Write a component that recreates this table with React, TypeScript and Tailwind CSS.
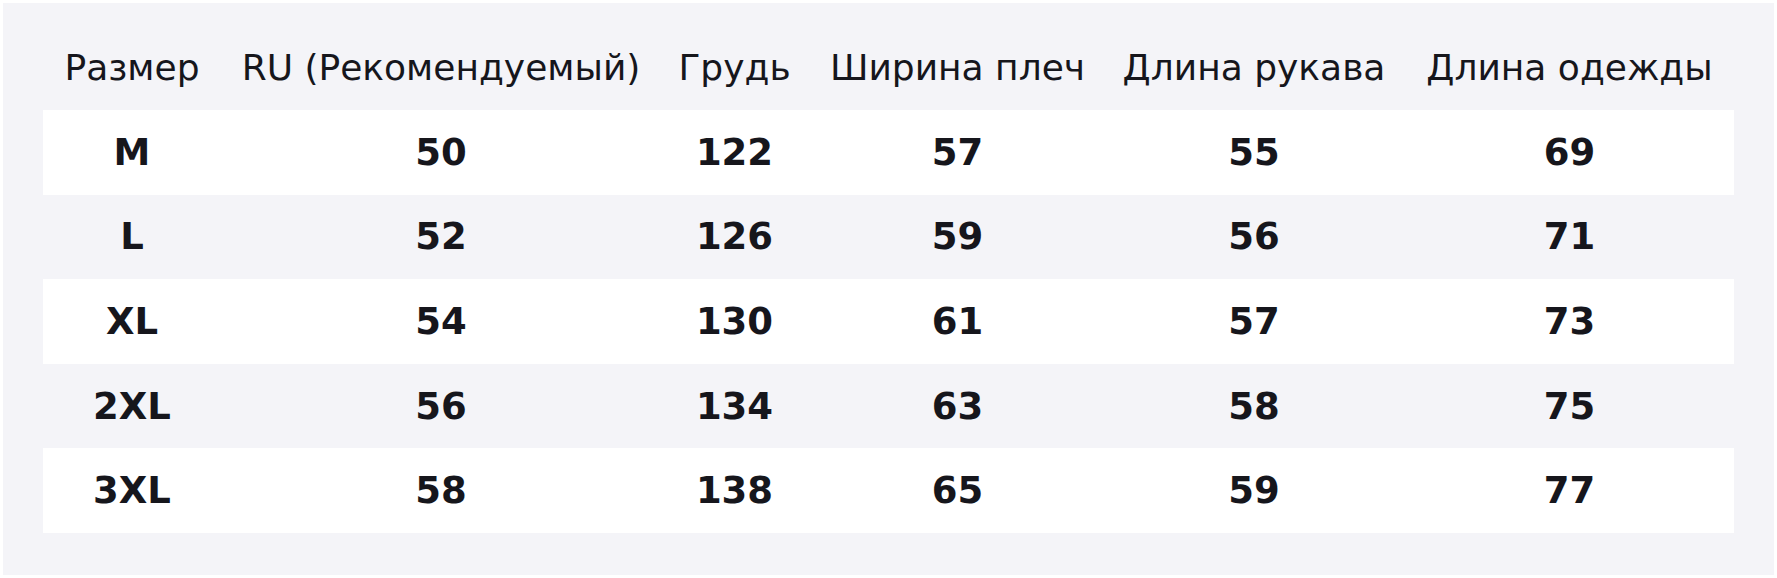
const headers = ['Размер', 'RU (Рекомендуемый)', 'Грудь', 'Ширина плеч', 'Длина рукава', 'Длина одежды']

const rows = [
  ['M', '50', '122', '57', '55', '69'],
  ['L', '52', '126', '59', '56', '71'],
  ['XL', '54', '130', '61', '57', '73'],
  ['2XL', '56', '134', '63', '58', '75'],
  ['3XL', '58', '138', '65', '59', '77'],
]

const widths = ['w-[182px] pr-[4px]', 'w-[432px]', 'w-[155px]', 'w-[291px]', 'w-[302px]', 'w-auto']

export default function App() {
  return (
    <div className="w-[1777px] h-[578px] bg-white p-[3px] font-['DejaVu_Sans',sans-serif] text-[#16161c]">
      <div className="h-full bg-[#f4f4f8] px-[40px] pt-[40px]">
        <table className="w-full table-fixed border-collapse">
          <thead>
            <tr className="h-[67px]">
              {headers.map((h, i) => (
                <th
                  key={h}
                  className={`${widths[i]} align-top pt-[10px] text-center text-[36px] font-normal leading-[30px] whitespace-nowrap`}
                >
                  {h}
                </th>
              ))}
            </tr>
          </thead>
          <tbody>
            {rows.map((row, r) => (
              <tr key={row[0]} className={`h-[84.6px] ${r % 2 === 0 ? 'bg-white' : 'bg-[#f4f4f8]'}`}>
                {row.map((cell, i) => (
                  <td
                    key={i}
                    className={`text-center align-middle text-[37px] font-bold leading-none py-0 ${i === 0 ? 'pl-0 pr-[4px]' : 'px-0'}`}
                  >
                    {cell}
                  </td>
                ))}
              </tr>
            ))}
          </tbody>
        </table>
      </div>
    </div>
  )
}
